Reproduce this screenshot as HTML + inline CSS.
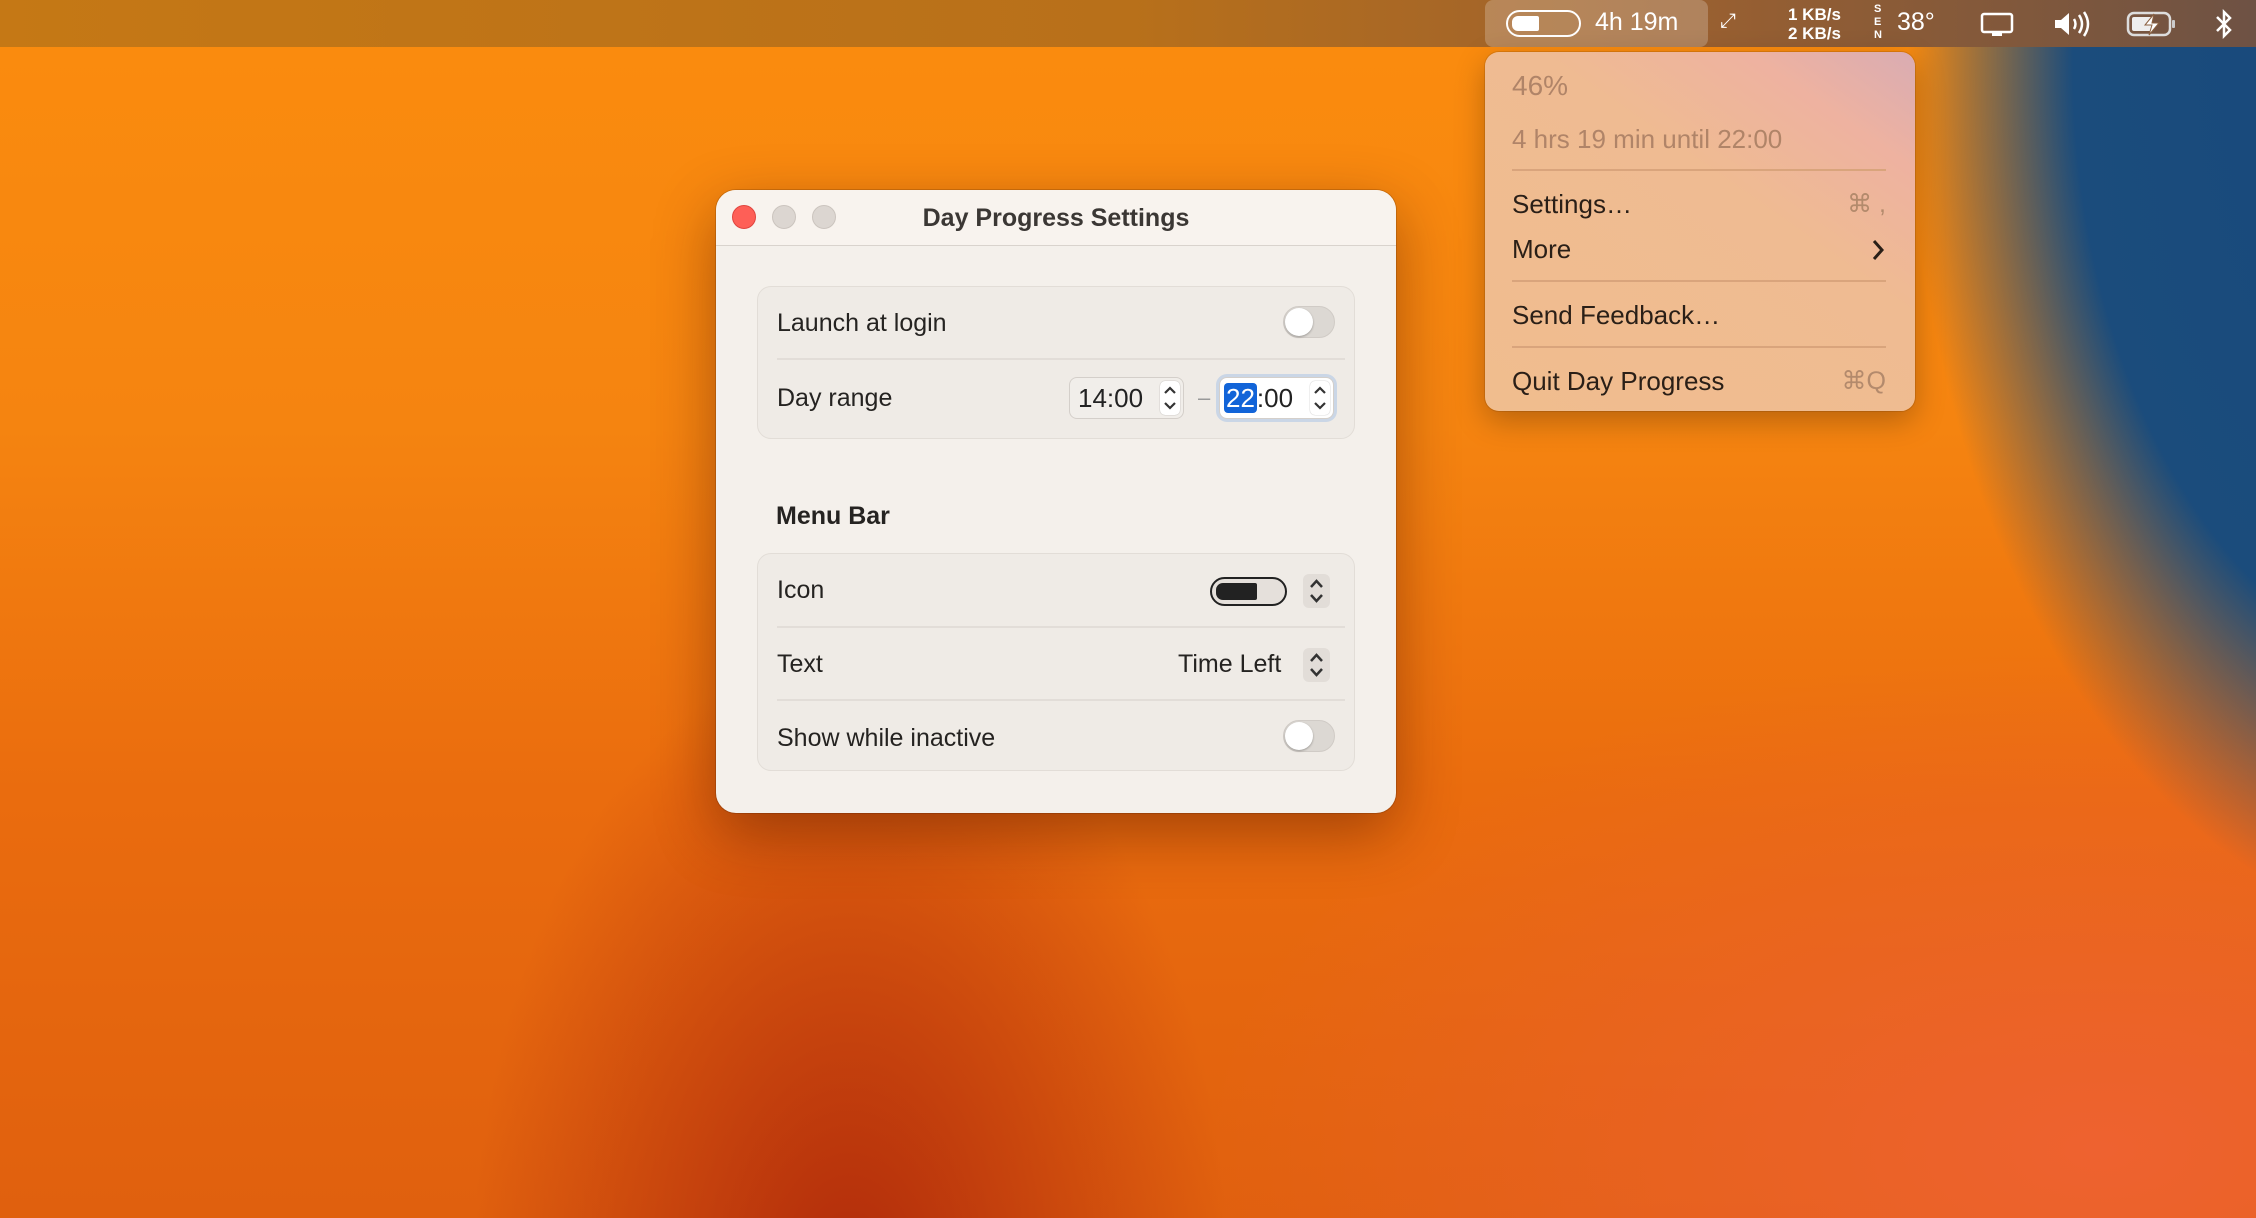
<!DOCTYPE html>
<html><head><meta charset="utf-8"><style>
*{margin:0;padding:0;box-sizing:border-box}
html,body{width:2256px;height:1218px;overflow:hidden}
body{position:relative;font-family:"Liberation Sans",sans-serif;
background:
radial-gradient(ellipse 640px 1000px at 2470px 60px,#16487c 0%,#1b4c7c 62%,rgba(60,70,110,0) 88%),
radial-gradient(ellipse 380px 650px at 850px 1300px,#b02a0c 0%,rgba(200,60,10,0) 100%),
radial-gradient(ellipse 900px 500px at 2100px 1150px,#ee6230 0%,rgba(238,98,48,0) 100%),
linear-gradient(180deg,#fb8c0e 0%,#f58410 35%,#ea6c0e 65%,#e0600e 100%);}
.bar{position:absolute;left:0;top:0;width:2256px;height:47px;background:linear-gradient(90deg,#c57815 0%,#b8701a 50%,#9a6030 75%,#6e5244 100%);color:#fff}
.hl{position:absolute;left:1485px;top:0;width:223px;height:47px;background:rgba(255,255,255,.22);border-radius:8px}
.bar .t{position:absolute;font-size:25px;top:8px}
.win{position:absolute;left:716px;top:190px;width:680px;height:623px;background:#f4f0eb;border-radius:20px;box-shadow:0 20px 60px rgba(80,20,0,.45),0 0 0 1px rgba(0,0,0,.15)}
.tb{height:56px;border-bottom:1px solid #d9d3cd;background:#f8f3ee;border-radius:20px 20px 0 0;text-align:center;font-weight:bold;font-size:25px;color:#3b3734;line-height:56px}
.dot{position:absolute;top:15px;width:24px;height:24px;border-radius:50%;background:#dcd6d1;border:1px solid #cbc4be}
.grp{position:absolute;left:41px;width:598px;background:#efebe6;border:1px solid #e2ddd7;border-radius:14px}
.row{position:absolute;left:19px;font-size:25px;color:#252321}
.div{position:absolute;left:19px;right:9px;height:2px;background:#e2ddd8}
.tog{position:absolute;right:19px;width:52px;height:32px;border-radius:16px;background:#dcd8d3;border:1px solid #d0cbc6}
.tog::after{content:"";position:absolute;left:1px;top:1px;width:28px;height:28px;border-radius:50%;background:#fff;box-shadow:0 1px 2px rgba(0,0,0,.3)}
.field{position:absolute;height:42px;border:1px solid #d4cfca;border-radius:8px;background:#f1eeea;font-size:26px;color:#222;line-height:40px}
.step{position:absolute;width:20px;height:34px;top:3px;background:#fff;border-radius:5px;box-shadow:0 0 1px rgba(0,0,0,.4)}
.step svg,.pop svg{position:absolute;left:0;top:0}
.pop{position:absolute;width:27px;height:34px;background:#e2ddd8;border-radius:6px}
.menu{position:absolute;left:1485px;top:52px;width:430px;height:359px;border-radius:14px;background:linear-gradient(215deg,#d9acb3 0%,#eeb2a0 18%,#efbb92 40%,#f0bd8e 100%);box-shadow:0 10px 30px rgba(0,0,0,.25),0 0 0 1px rgba(0,0,0,.1)}
.mi{position:absolute;left:27px;font-size:26px;color:#2a1f17}
.ms{position:absolute;left:27px;width:374px;height:2px;background:#d9a47c}
.sc{position:absolute;right:29px;font-size:25px;color:#b38a6c}
</style></head><body>
<div class="bar">
 <div class="hl"></div>
 <div style="position:absolute;left:1506px;top:10px;width:75px;height:27px;border:2px solid #fff;border-radius:14px"><div style="position:absolute;left:4px;top:4px;width:27px;height:15px;background:#fff;border-radius:6px 2px 2px 6px"></div></div>
 <div class="t" style="left:1595px">4h 19m</div>
 <div class="t" style="left:1720px;font-size:20px;top:10px">⤢</div>
 <div style="position:absolute;left:1788px;top:5px;font-size:17px;line-height:19px;text-align:right;font-weight:bold">1 KB/s<br>2 KB/s</div>
 <div style="position:absolute;left:1874px;top:3px;font-size:11px;line-height:13px;font-weight:bold">S<br>E<br>N</div>
 <div class="t" style="left:1897px">38°</div>
 <svg style="position:absolute;left:1980px;top:12px" width="34" height="26" viewBox="0 0 34 26"><rect x="2" y="2" width="30" height="18" rx="2" fill="none" stroke="#fff" stroke-width="2.5"/><rect x="12" y="21" width="10" height="3" fill="#fff"/></svg>
 <svg style="position:absolute;left:2052px;top:10px" width="40" height="28" viewBox="0 0 40 28"><path d="M3 10h6l8-7v22l-8-7H3z" fill="#fff"/><path d="M22 9q3 5 0 10M27 5q6 9 0 18M32 2q8 12 0 24" stroke="#fff" stroke-width="2.5" fill="none"/></svg>
 <svg style="position:absolute;left:2126px;top:11px" width="52" height="26" viewBox="0 0 52 26"><rect x="2" y="2" width="42" height="22" rx="6" fill="none" stroke="#ddd" stroke-width="2.5"/><rect x="6" y="6" width="20" height="14" rx="2" fill="#eee"/><rect x="46" y="9" width="3" height="8" rx="1" fill="#ccc"/><path d="M28 3l-9 11h7l-3 10 10-12h-7z" fill="#fff" stroke="#8a6040" stroke-width="1"/></svg>
 <svg style="position:absolute;left:2214px;top:9px" width="20" height="30" viewBox="0 0 20 30"><path d="M3 8l13 13-6 6V3l6 6L3 22" stroke="#fff" stroke-width="2.5" fill="none"/></svg>
</div>

<div class="menu">
 <div class="mi" style="top:18px;color:#b08468;font-size:28px">46%</div>
 <div class="mi" style="top:72px;color:#b08468">4 hrs 19 min until 22:00</div>
 <div class="ms" style="top:117px"></div>
 <div class="mi" style="top:137px">Settings…</div><div class="sc" style="top:137px">⌘ ,</div>
 <div class="mi" style="top:182px">More</div>
 <svg style="position:absolute;right:30px;top:186px" width="14" height="24" viewBox="0 0 14 24"><path d="M3 3l8 9-8 9" stroke="#2a1f17" stroke-width="3" fill="none"/></svg>
 <div class="ms" style="top:228px"></div>
 <div class="mi" style="top:248px">Send Feedback…</div>
 <div class="ms" style="top:294px"></div>
 <div class="mi" style="top:314px">Quit Day Progress</div><div class="sc" style="top:314px">⌘Q</div>
</div>

<div class="win">
 <div class="tb">Day Progress Settings</div>
 <div class="dot" style="left:16px;background:#fe5f57;border-color:#e0443e"></div>
 <div class="dot" style="left:56px"></div>
 <div class="dot" style="left:96px"></div>

 <div class="grp" style="top:96px;height:153px">
  <div class="row" style="top:22px">Launch at login</div>
  <div class="tog" style="top:19px"></div>
  <div class="div" style="top:71px"></div>
  <div class="row" style="top:97px">Day range</div>
  <div class="field" style="left:311px;top:90px;width:115px;padding-left:8px">14:00<div class="step" style="right:3px"><svg width="20" height="34" viewBox="0 0 20 34"><path d="M5 12l5-5 5 5M5 22l5 5 5-5" stroke="#333" stroke-width="2.2" fill="none"/></svg></div></div>
  <div style="position:absolute;left:440px;top:98px;font-size:22px;color:#999">–</div>
  <div class="field" style="left:461px;top:90px;width:115px;padding-left:4px;background:#fff;box-shadow:0 0 0 3px rgba(90,150,230,.25)"><span style="background:#1264d8;color:#fff;border-radius:4px;padding:0 2px">22</span>:00<div class="step" style="right:3px"><svg width="20" height="34" viewBox="0 0 20 34"><path d="M5 12l5-5 5 5M5 22l5 5 5-5" stroke="#333" stroke-width="2.2" fill="none"/></svg></div></div>
 </div>

 <div style="position:absolute;left:60px;top:312px;font-size:25px;font-weight:bold;color:#252321">Menu Bar</div>

 <div class="grp" style="top:363px;height:218px">
  <div class="row" style="top:22px">Icon</div>
  <div style="position:absolute;left:452px;top:23px;width:77px;height:29px;border:2px solid #222;border-radius:15px;background:#e5e0db"><div style="position:absolute;left:4px;top:4px;width:41px;height:17px;background:#222;border-radius:7px 2px 2px 7px"></div></div>
  <div class="pop" style="left:545px;top:20px"><svg width="27" height="34" viewBox="0 0 27 34"><path d="M8 13l5.5-6 5.5 6M8 21l5.5 6 5.5-6" stroke="#333" stroke-width="2.5" fill="none"/></svg></div>
  <div class="div" style="top:72px"></div>
  <div class="row" style="top:96px">Text</div>
  <div class="row" style="top:96px;left:420px">Time Left</div>
  <div class="pop" style="left:545px;top:94px"><svg width="27" height="34" viewBox="0 0 27 34"><path d="M8 13l5.5-6 5.5 6M8 21l5.5 6 5.5-6" stroke="#333" stroke-width="2.5" fill="none"/></svg></div>
  <div class="div" style="top:145px"></div>
  <div class="row" style="top:170px">Show while inactive</div>
  <div class="tog" style="top:166px"></div>
 </div>
</div>
</body></html>
